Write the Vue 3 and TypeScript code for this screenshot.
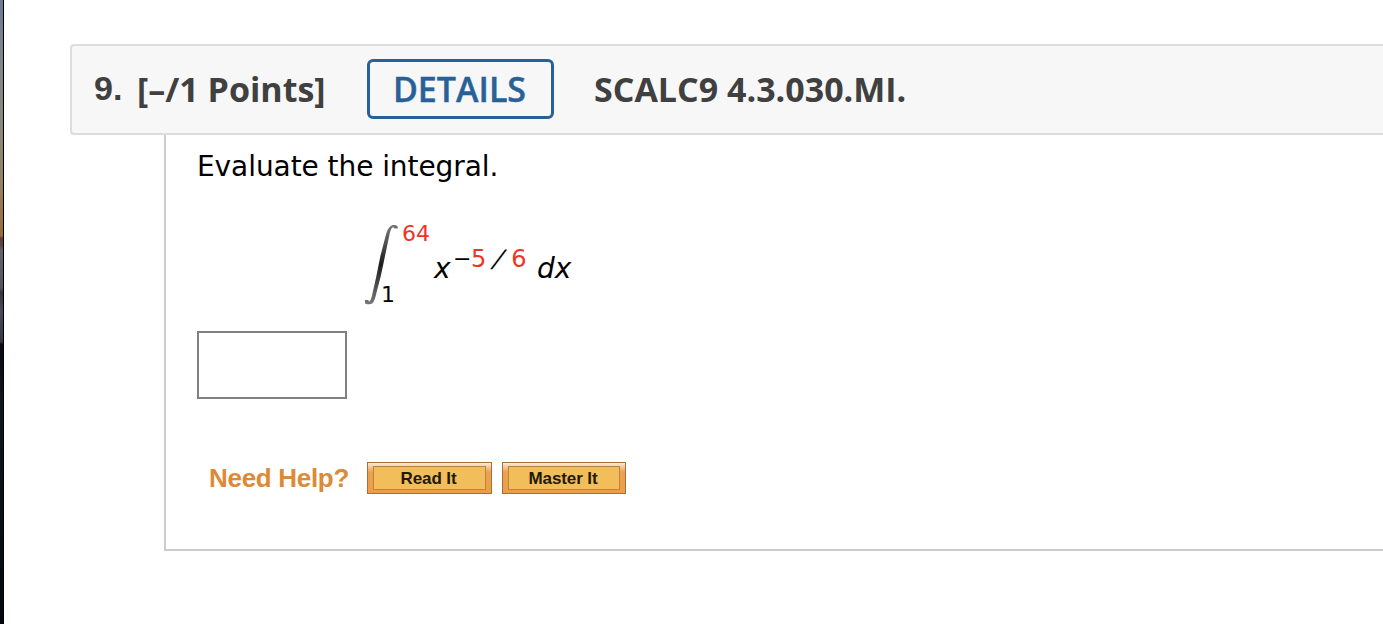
<template>
  <div class="page">
    <div class="desktop-edge"></div>
    <main class="question">
      <header class="question-header">
        <span class="number">{{ question.number }}.</span>
        <span class="points">[{{ question.score }}/{{ question.total }} Points]</span>
        <button class="details" type="button">DETAILS</button>
        <span class="source">{{ question.source }}</span>
      </header>
      <section class="question-body">
        <p class="prompt">{{ question.prompt }}</p>
        <div class="formula">
          <svg class="integral" width="37" height="84" viewBox="0 0 37 84">
            <defs>
              <linearGradient id="stroke" x1="0" y1="0" x2="0" y2="1">
                <stop offset="0" stop-color="#777" />
                <stop offset="0.2" stop-color="#555" />
                <stop offset="0.5" stop-color="#1c1c1c" />
                <stop offset="0.8" stop-color="#555" />
                <stop offset="1" stop-color="#777" />
              </linearGradient>
            </defs>
            <path
              fill="url(#stroke)"
              d="M32.8 5.4 C31 4 28.4 3.6 26.6 4.4 C23.4 6 22 10 20.6 15 L15.4 35 L11.4 55 L7.6 72 C6.4 77.6 5.4 80.6 3.6 80.6 L3.6 79 L0 79 L0 82.4 C2 83.2 5 84 7.2 82.6 C9.4 80.6 10.4 76.6 11.4 72 L15.8 55 L20 35 L24.2 15 C25.2 10 26 7.4 27.6 6.4 C28.4 6.2 29 6.6 29.4 7.6 L32.8 7.4 Z"
            />
          </svg>
          <span class="limits">
            <span class="upper">{{ question.upper }}</span>
            <span class="lower">{{ question.lower }}</span>
          </span>
          <i class="base">x</i>
          <span class="exponent">
            <span class="minus">−</span><span class="value">5</span><i class="slash">/</i><span class="value">6</span>
          </span>
          <i class="differential">dx</i>
        </div>
        <input class="answer" type="text" />
        <div class="help">
          <span class="help-label">Need Help?</span>
          <button v-for="link in helpLinks" :key="link" class="help-button" type="button">
            <span class="help-text">{{ link }}</span>
          </button>
        </div>
      </section>
    </main>
  </div>
</template>

<script setup lang="ts">
import { ref } from 'vue'

interface Question {
  number: number
  score: string
  total: number
  source: string
  prompt: string
  upper: number
  lower: number
}

const question = ref<Question>({
  number: 9,
  score: '–',
  total: 1,
  source: 'SCALC9 4.3.030.MI.',
  prompt: 'Evaluate the integral.',
  upper: 64,
  lower: 1
})

const helpLinks = ['Read It', 'Master It']
</script>

<style>
body {
  margin: 0;
  background: #fff;
  overflow: hidden;
}
</style>

<style scoped>
.page {
  display: flex;
  height: 624px;
  overflow: hidden;
  background: #fff;
}

.desktop-edge {
  flex: none;
  box-sizing: border-box;
  width: 4px;
  border-right: 1px solid #000;
  background: linear-gradient(
    #6c7a94 0,
    #80868c 60px,
    #8b887c 130px,
    #94805f 190px,
    #9a6a3c 236px,
    #5c4038 238px,
    #5a4a4c 246px,
    #66626a 250px,
    #55535f 288px,
    #38333f 292px,
    #4a4a5a 310px,
    #343747 342px,
    #080a10 344px,
    #11151e 400px,
    #0c111b 480px,
    #03070d 624px
  );
}

.question {
  flex: 1;
  min-width: 0;
  padding: 44px 0 0 66px;
}

.question-header {
  display: flex;
  align-items: flex-start;
  box-sizing: border-box;
  height: 91px;
  padding: 13px 0 0 22px;
  border: 2px solid #ddd;
  border-right: 0;
  border-radius: 4px 0 0 4px;
  background: #f7f7f7;
  color: #404040;
  font: bold 34px/60px "Open Sans", sans-serif;
  white-space: nowrap;
}

.number {
  width: 43px;
  font-family: "Liberation Sans", Arial, sans-serif;
  line-height: 58px;
}

.points {
  width: 230px;
}

.details {
  box-sizing: border-box;
  width: 187px;
  height: 60px;
  margin-right: 40px;
  padding: 1px 2px 0 0;
  border: 3px solid #286197;
  border-radius: 6px;
  background: transparent;
  color: #286197;
  font: 600 34px/53px "Open Sans", sans-serif;
  -webkit-text-stroke: 0.4px #286197;
}

.question-body {
  box-sizing: border-box;
  height: 416px;
  margin-left: 94px;
  padding: 18px 0 0 31px;
  border-left: 2px solid #ccc;
  border-bottom: 2px solid #ccc;
  color: #000;
  font: 28px/28px Verdana, "DejaVu Sans", sans-serif;
}

.prompt {
  margin: 0;
  letter-spacing: -0.07px;
}

.formula {
  display: flex;
  align-items: flex-start;
  height: 110px;
  margin-top: 40px;
  padding-left: 168px;
  white-space: nowrap;
}

.integral {
  flex: none;
}

.limits {
  display: flex;
  flex-direction: column;
  width: 32px;
  margin-top: 2px;
  font-size: 22px;
  line-height: 22px;
}

.upper {
  color: #ee3524;
}

.lower {
  margin: 39px 0 0 -21px;
}

.base {
  width: 19px;
  margin-top: 34px;
}

.exponent {
  display: flex;
  width: 84px;
  margin-top: 26px;
  font-size: 24px;
  line-height: 24px;
}

.minus {
  width: 18px;
  font-size: 22px;
}

.exponent .value {
  color: #ee3524;
}

.slash {
  width: 25px;
  text-align: center;
  transform: skewX(-14deg);
}

.differential {
  margin-top: 34px;
}

.answer {
  display: block;
  box-sizing: border-box;
  width: 150px;
  height: 68px;
  padding: 0 8px;
  border: 2px solid #808080;
  border-radius: 0;
  background: #fff;
  font: inherit;
  outline: none;
}

.help {
  display: flex;
  margin-top: 63px;
  padding-left: 12px;
  font-family: "Liberation Sans", Arial, sans-serif;
  font-weight: bold;
}

.help-label {
  width: 158px;
  color: #dd8a36;
  font-size: 26px;
  letter-spacing: -0.3px;
  line-height: 32px;
}

.help-button {
  box-sizing: border-box;
  width: 125px;
  height: 32px;
  margin-right: 10px;
  padding: 3px 5px 4px;
  border: 1px solid #a3713a;
  background: linear-gradient(#fdeedd 0, #f4c79a 4px, #eda14e 9px, #ec9d48 100%);
  color: #221a05;
  font: inherit;
}

.help-button:last-child {
  width: 124px;
}

.help-text {
  display: block;
  box-sizing: border-box;
  height: 24px;
  padding-right: 2px;
  border: 1.5px solid #b98543;
  background: #f2be5c;
  font-size: 17px;
  letter-spacing: -0.1px;
  line-height: 24px;
}
</style>
